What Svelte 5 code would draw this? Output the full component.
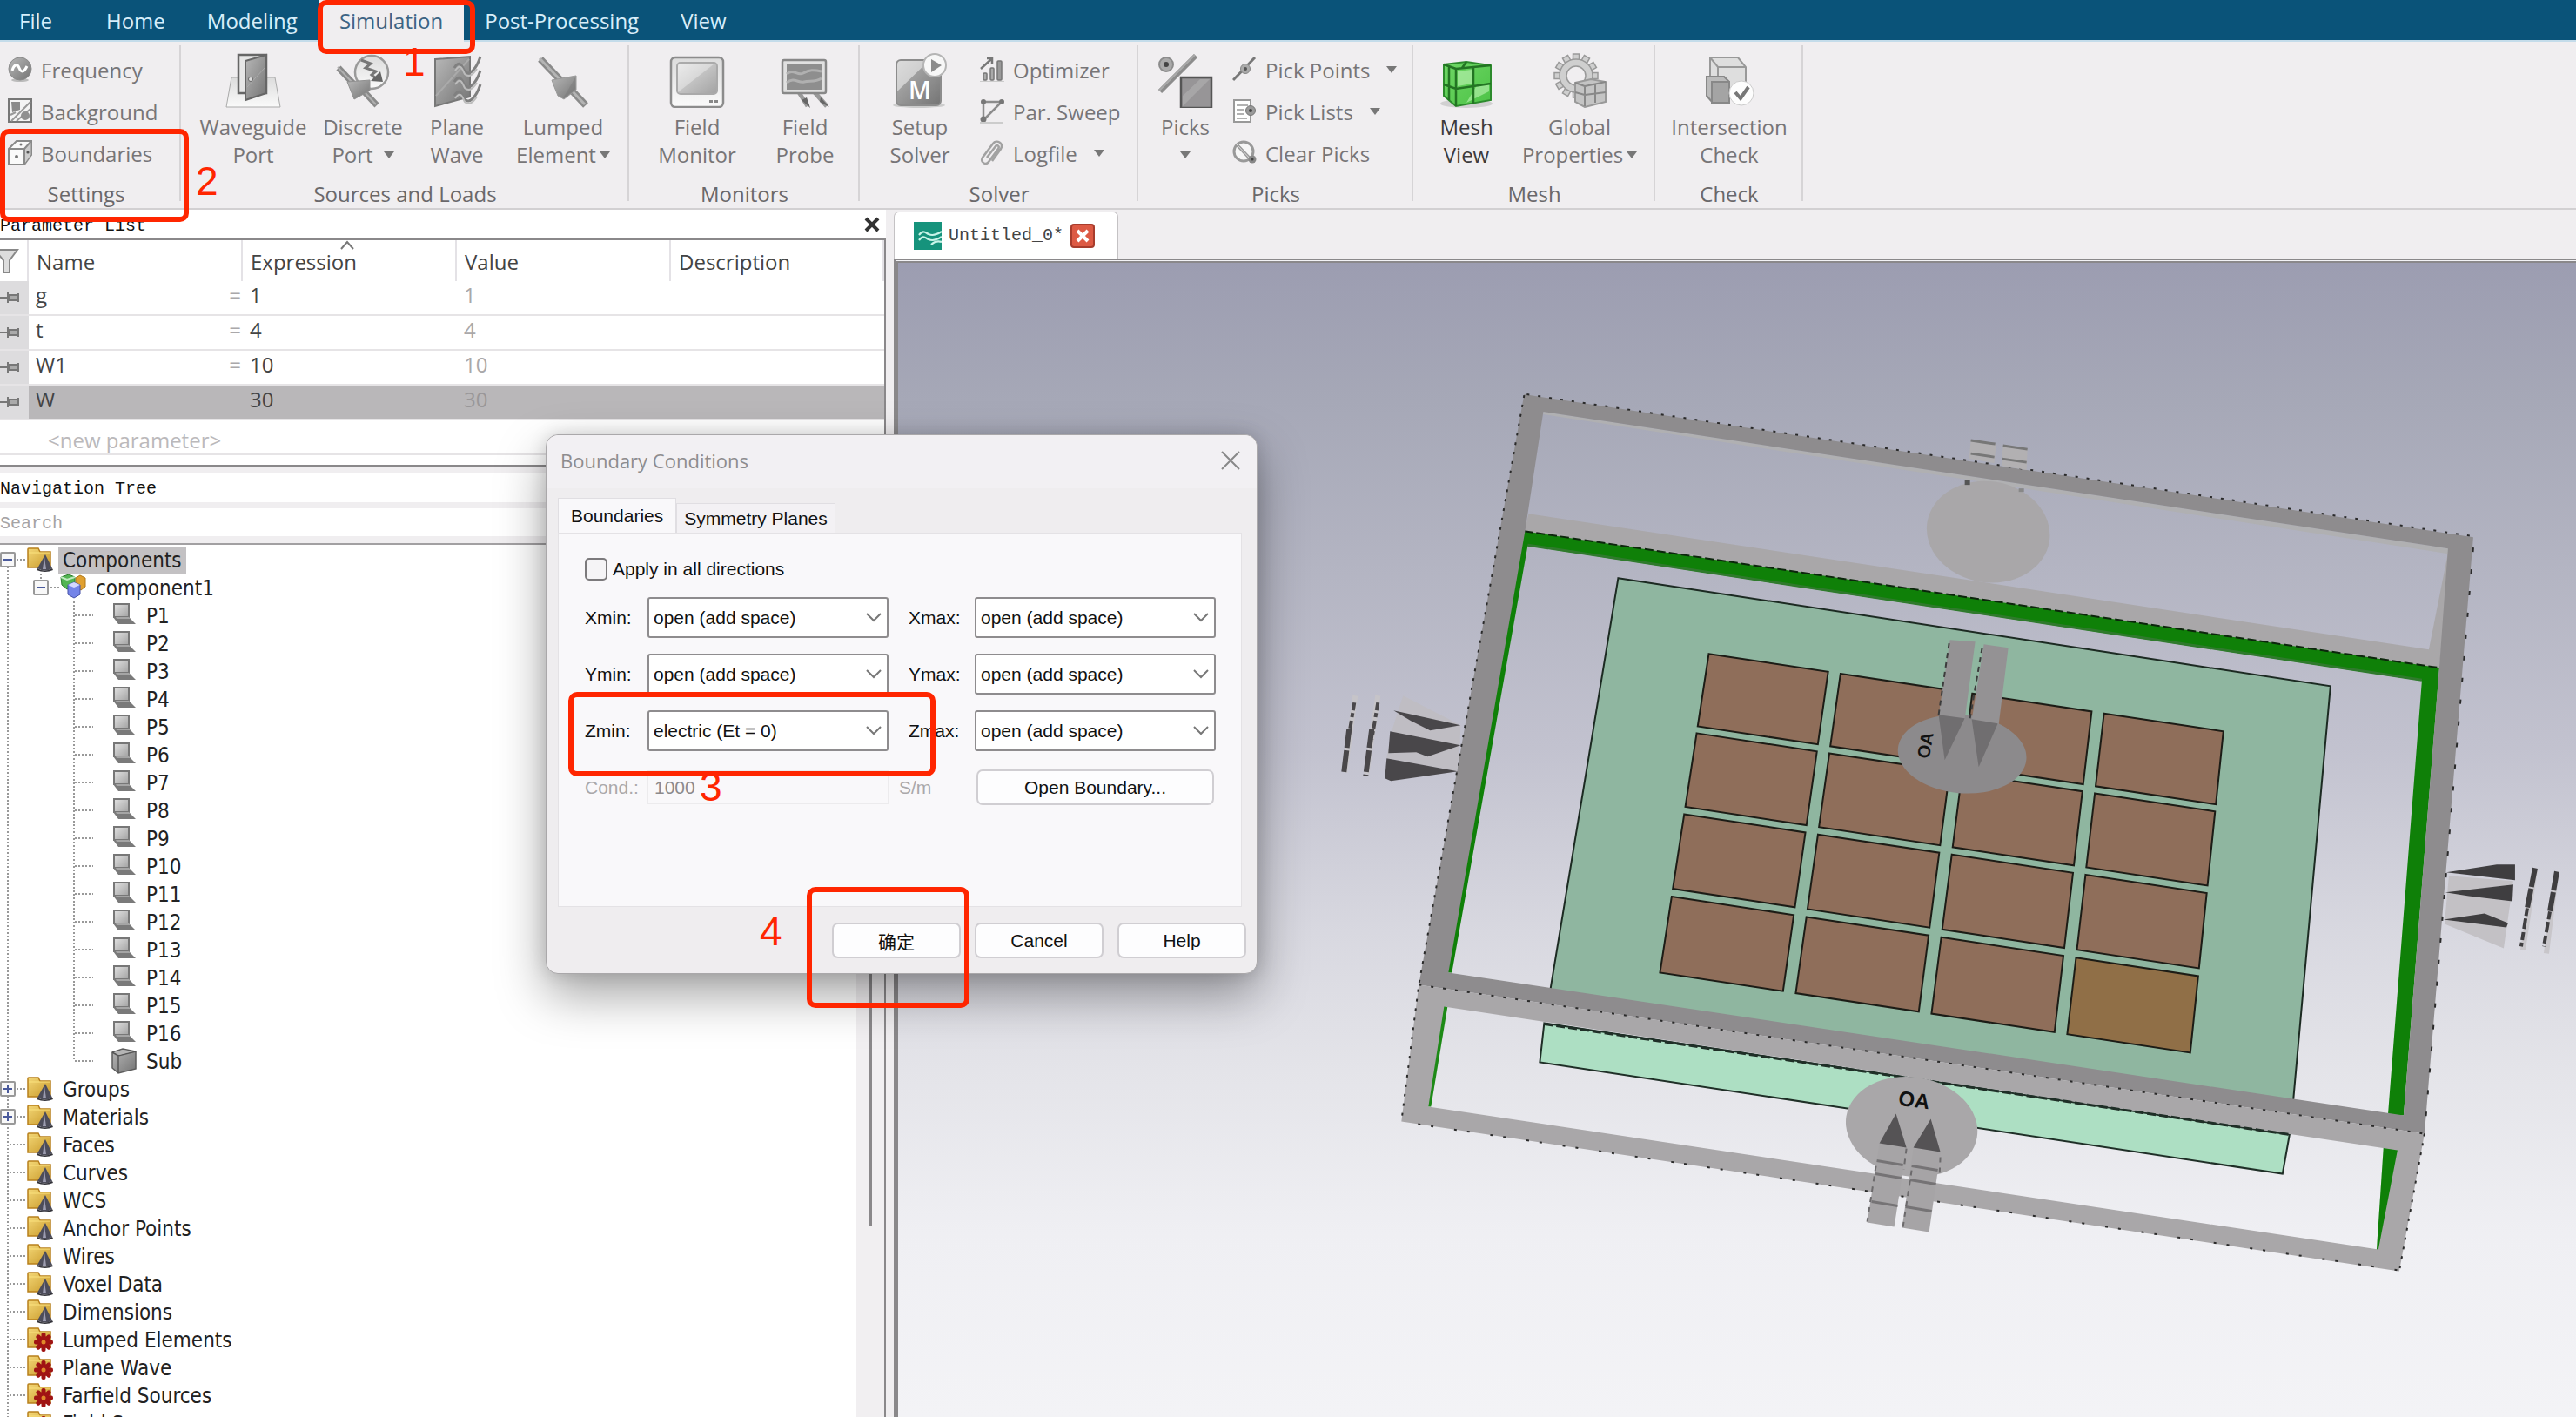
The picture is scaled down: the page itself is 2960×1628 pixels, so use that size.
<script>
  const menu = ['File', 'Home', 'Modeling', 'Simulation', 'Post-Processing', 'View'];

  const groups = [
    {
      name: 'Settings', cls: 'settings', big: [],
      small: [
        { icon: 'frequency', text: 'Frequency' },
        { icon: 'background', text: 'Background' },
        { icon: 'boundaries', text: 'Boundaries' }
      ]
    },
    {
      name: 'Sources and Loads', cls: 'sources', small: [],
      big: [
        { icon: 'waveguide', a: 'Waveguide', b: 'Port', cls: 'w140' },
        { icon: 'discrete', a: 'Discrete', b: 'Port', drop: true, spaced: true, cls: 'w112' },
        { icon: 'plane', a: 'Plane', b: 'Wave', cls: 'w104' },
        { icon: 'lumped', a: 'Lumped', b: 'Element', drop: true, cls: 'w140' }
      ]
    },
    {
      name: 'Monitors', cls: 'monitors', small: [],
      big: [
        { icon: 'monitor', a: 'Field', b: 'Monitor', cls: 'w124' },
        { icon: 'probe', a: 'Field', b: 'Probe', cls: 'w124' }
      ]
    },
    {
      name: 'Solver', cls: 'solver',
      big: [{ icon: 'setup', a: 'Setup', b: 'Solver', cls: 'w104' }],
      small: [
        { icon: 'optimizer', text: 'Optimizer' },
        { icon: 'sweep', text: 'Par. Sweep' },
        { icon: 'logfile', text: 'Logfile', drop: true }
      ]
    },
    {
      name: 'Picks', cls: 'picks',
      big: [{ icon: 'picks', a: 'Picks', b: '', drop: true, cls: 'w88' }],
      small: [
        { icon: 'pickpoints', text: 'Pick Points', drop: true },
        { icon: 'picklists', text: 'Pick Lists', drop: true },
        { icon: 'clearpicks', text: 'Clear Picks' }
      ]
    },
    {
      name: 'Mesh', cls: 'mesh', small: [],
      big: [
        { icon: 'mesh', a: 'Mesh', b: 'View', dark: true, cls: 'w104' },
        { icon: 'global', a: 'Global', b: 'Properties', drop: true, cls: 'w156' }
      ]
    },
    {
      name: 'Check', cls: 'check', small: [],
      big: [{ icon: 'intersect', a: 'Intersection', b: 'Check', cls: 'w172' }]
    }
  ];

  const params = [
    { name: 'g', eq: true, value: '1' },
    { name: 't', eq: true, value: '4' },
    { name: 'W1', eq: true, value: '10' },
    { name: 'W', eq: false, value: '30', selected: true }
  ];

  const tree = [
    { level: 0, box: 'minus', icon: 'folder', text: 'Components', selected: true, first: true },
    { level: 1, box: 'minus', icon: 'cubes', text: 'component1' },
    ...Array.from({ length: 16 }, (_, i) => ({ level: 2, icon: 'patch', text: 'P' + (i + 1) })),
    { level: 2, icon: 'brick', text: 'Sub', last: true },
    { level: 0, box: 'plus', icon: 'folder', text: 'Groups' },
    { level: 0, box: 'plus', icon: 'folder', text: 'Materials' },
    ...['Faces', 'Curves', 'WCS', 'Anchor Points', 'Wires', 'Voxel Data', 'Dimensions']
      .map((text) => ({ level: 0, icon: 'folder', text })),
    ...['Lumped Elements', 'Plane Wave', 'Farfield Sources', 'Field Sources']
      .map((text) => ({ level: 0, icon: 'gearfolder', text }))
  ];

  const axes = [
    { min: 'Xmin:', max: 'Xmax:', value: 'open (add space)' },
    { min: 'Ymin:', max: 'Ymax:', value: 'open (add space)' },
    { min: 'Zmin:', max: 'Zmax:', value: 'electric (Et = 0)' }
  ];
  const kinds = ['electric (Et = 0)', 'magnetic (Ht = 0)', 'open', 'open (add space)'];

  // Patch array: bilinear interpolation between the four outer corners.
  const corners = [[1964, 752], [2555, 841], [1908, 1118], [2517, 1210]];
  const rows = [[0, 0.227], [0.249, 0.48], [0.503, 0.737], [0.7615, 1]];
  function at(u, v) {
    return [0, 1]
      .map((k) => {
        const top = corners[0][k] * (1 - u) + corners[1][k] * u;
        const bottom = corners[2][k] * (1 - u) + corners[3][k] * u;
        return (top * (1 - v) + bottom * v).toFixed(1);
      })
      .join(',');
  }
  const patches = rows.flatMap(([v0, v1], r) =>
    [0, 1, 2, 3].map((c) => {
      const u0 = c * 0.256;
      const u1 = u0 + 0.232;
      return { points: [at(u0, v0), at(u1, v0), at(u1, v1), at(u0, v1)].join(' '), active: r === 3 && c === 3 };
    })
  );

  const teeth = Array.from({ length: 12 }, (_, i) => i * 30);
  const petals = Array.from({ length: 8 }, (_, i) => i * 45);
</script>

{#snippet art(name)}
  {#if name === 'frequency'}
    <ellipse cx="14" cy="27" rx="10" ry="2" fill="#bbb" />
    <circle cx="14" cy="14" r="13" fill="url(#gDark)" stroke="#8a8a8a" />
    <path d="M5 16c2-7 6-8 8-3s5 6 9-2" fill="none" stroke="#fff" stroke-width="3" />
  {:else if name === 'background'}
    <rect x="1" y="1" width="26" height="26" fill="#f4f4f4" stroke="#777" stroke-width="2" />
    <path d="M4 4h10v9l-9 3z" fill="#8a8a8a" />
    <path d="M4 26L26 4M3 19l6-3M16 14l8-8M10 26L26 12" stroke="#999" stroke-width="2" />
    <circle cx="20" cy="20" r="5" fill="#909090" />
  {:else if name === 'boundaries'}
    <path d="M1 10l9-9h17v16l-8 11H1z" fill="#fafafa" stroke="#8a8a8a" stroke-width="2" />
    <path d="M19 10l8-9v16l-8 11z" fill="#ccc" stroke="#8a8a8a" />
    <path d="M1 10h18v18M19 10l8-9" fill="none" stroke="#8a8a8a" stroke-width="2" />
    <circle cx="10" cy="19" r="2" fill="#777" /><circle cx="15" cy="5" r="1.5" fill="#777" /><circle cx="23" cy="14" r="1.6" fill="#555" />
  {:else if name === 'optimizer'}
    <path d="M1 14L13 3M8 2h6v6" fill="none" stroke="#777" stroke-width="2.5" />
    <rect x="4" y="19" width="4" height="8" rx="1" fill="#aaa" stroke="#777" stroke-width="1.5" />
    <rect x="12" y="13" width="4" height="14" rx="1" fill="#aaa" stroke="#777" stroke-width="1.5" />
    <rect x="20" y="5" width="5" height="22" rx="1" fill="#999" stroke="#777" stroke-width="1.5" />
    <path d="M0 28.500h28" stroke="#ccc" />
  {:else if name === 'sweep'}
    <path d="M4 25V4h21L4 25" fill="none" stroke="#8c8c8c" stroke-width="2.500" />
    <circle cx="4" cy="4" r="3" fill="#777" /><circle cx="25" cy="4" r="3" fill="#777" /><circle cx="4" cy="24" r="3.500" fill="#777" />
    <path d="M0 28h27" stroke="#ccc" stroke-width="2" />
  {:else if name === 'logfile'}
    <path d="M8 20L18 7c2-2 5 0 3 3L10 25c-3 4-10 1-7-5L15 4c4-5 13-1 9 6L14 24" fill="none" stroke="#a2a2a2" stroke-width="2.500" />
  {:else if name === 'pickpoints'}
    <path d="M1 27L26 1" stroke="#777" stroke-width="3" />
    <circle cx="15" cy="14" r="5.500" fill="#aaa" stroke="#888" /><circle cx="15" cy="14" r="2" fill="#555" />
  {:else if name === 'picklists'}
    <path d="M2 2h19v25H2z" fill="#fff" stroke="#999" stroke-width="2" />
    <path d="M5 8h13M5 13h9M5 18h9M5 23h12" stroke="#999" stroke-width="1.500" />
    <circle cx="21" cy="14" r="5.500" fill="#999" stroke="#777" /><circle cx="21" cy="14" r="2" fill="#444" />
  {:else if name === 'clearpicks'}
    <circle cx="13" cy="13" r="11" fill="#f6f6f6" stroke="#999" stroke-width="3" />
    <path d="M5 5l17 18" stroke="#999" stroke-width="3.500" /><path d="M5 5l17 18" stroke="#ddd" />
    <circle cx="23" cy="22" r="4.500" fill="#888" /><circle cx="23" cy="22" r="1.600" fill="#444" />
  {:else if name === 'waveguide'}
    <path d="M7 29h50l6 34H1z" fill="url(#gPale)" stroke="#aaa" />
    <path d="M15 3h32v44H15z" fill="#e6e6e6" stroke="#666" stroke-width="2.500" />
    <path d="M23 10L47 3v44l-24 8z" fill="url(#gDark)" stroke="#666" stroke-width="2" />
    <path d="M25 40l20-22" stroke="#aaa" /><circle cx="29" cy="31" r="2.500" fill="#ddd" stroke="#666" />
  {:else if name === 'discrete'}
    <circle cx="42" cy="23" r="19" fill="url(#gPale)" stroke="#9a9a9a" stroke-width="2.500" />
    <path d="M30 9l11 4-6 5 12 4-5 4 6 5" fill="none" stroke="#777" stroke-width="3" />
    <path d="M55 34l-14-1 11-11z" fill="#666" />
    <path d="M4 18l17 18M34 46l14 15" stroke="#8a8a8a" stroke-width="7" />
    <path d="M3 17l17 18M33 45l14 15" stroke="#b0b0b0" stroke-width="2" />
    <path d="M14 34l26-2v12L22 54z" fill="url(#gDark)" stroke="#909090" />
  {:else if name === 'plane'}
    <path d="M7 8l40-3v46L7 62z" fill="url(#gDark)" stroke="#777" stroke-width="2" />
    <path d="M8 50L46 8" stroke="#aaa" stroke-width="2" />
    {#each [0, 16, 32] as dy}
      <path d="M29 {18 + dy}c6-10 9-2 12 4 5 6 13-2 18-17" fill="none" stroke="#808080" stroke-width="3" />
      <path d="M30 {21 + dy}c6-9 8-2 11 4 4 4 9 2 14-6" fill="none" stroke="#bcbcbc" stroke-width="2" />
    {/each}
  {:else if name === 'lumped'}
    <path d="M6 8l23 24M42 44l16 17" stroke="#8a8a8a" stroke-width="8" />
    <path d="M5 7l23 24M41 43l16 17" stroke="#b4b4b4" stroke-width="3" />
    <path d="M19 32l28-5v16L33 54l-7-4z" fill="url(#gDark)" stroke="#999" />
    <path d="M46 29v13L32 53z" fill="#777" opacity=".45" />
  {:else if name === 'monitor'}
    <rect x="2" y="6" width="60" height="57" rx="5" fill="url(#gPale)" stroke="#8c8c8c" stroke-width="2.500" />
    <rect x="9" y="12" width="46" height="36" rx="4" fill="url(#gMid)" stroke="#aaa" stroke-width="2" />
    <path d="M10 46L52 13H13q-3 0-3 4z" fill="#fff" opacity=".35" />
    <rect x="46" y="55" width="4" height="3" fill="#888" /><rect x="52" y="55" width="4" height="3" fill="#888" />
  {:else if name === 'probe'}
    <path d="M25 46l10 16M43 46l14 16" stroke="#999" stroke-width="5" />
    <path d="M34 52l4 12-10-9zM50 52l10 11-11-6z" fill="#666" />
    <rect x="6" y="9" width="50" height="38" rx="2" fill="#e0e0e0" stroke="#888" stroke-width="2.500" />
    <rect x="11" y="13" width="40" height="30" fill="#8e8e8e" />
    <path d="M11 25c8-7 12 3 19-1s12-4 21-2M11 35c8-7 14 1 20-1s12 1 20-4" fill="none" stroke="#b0b0b0" stroke-width="3" />
  {:else if name === 'setup'}
    <ellipse cx="31" cy="61" rx="30" ry="3" fill="#ccc" />
    <rect x="5" y="9" width="51" height="52" rx="5" fill="url(#gDark)" stroke="#8c8c8c" stroke-width="2" />
    <path d="M6 45L42 10H10q-4 0-4 5z" fill="#fff" opacity=".5" />
    <text x="32" y="54" text-anchor="middle" class="glyph-m">M</text>
    <circle cx="49" cy="15" r="13" fill="#f7f7f7" stroke="#b5b5b5" stroke-width="2" />
    <path d="M45 8l12 7-12 8z" fill="#8b8b8b" />
  {:else if name === 'picks'}
    <path d="M3 45L44 4" stroke="#8c8c8c" stroke-width="6" /><path d="M2 44L43 3" stroke="#aaa" stroke-width="2" />
    <circle cx="10" cy="14" r="8" fill="#aaa" stroke="#8c8c8c" stroke-width="2" /><circle cx="10" cy="14" r="3" fill="#444" />
    <rect x="27" y="29" width="35" height="35" fill="#979597" stroke="#555" stroke-width="2.500" />
    <path d="M29 62V50l20-19h11z" fill="#fff" opacity=".16" />
  {:else if name === 'mesh'}
    <ellipse cx="32" cy="59" rx="30" ry="5" fill="#999" opacity=".35" />
    <path d="M6 14l26-3 28 4v40l-40 7L6 50z" fill="url(#gGreen)" stroke="#2c8a2c" stroke-width="2" />
    <path d="M22 22l16-2v16l-16 3zM44 38l14-1v8L32 58z" fill="#c9f7c0" opacity=".55" />
    <path d="M6 14l14 5v43M20 19l40-4M32 11l-5 7M12 16v39M40 17v42M6 37l14 5 40-6" fill="none" stroke="#237423" stroke-width="2.500" />
  {:else if name === 'global'}
    <g transform="translate(28 27)" fill="#cfcfcf" stroke="#999" stroke-width="1.500">
      {#each teeth as t}<rect x="-3.500" y="-25" width="7" height="9" transform="rotate({t})" />{/each}
      <circle r="19" />
      <circle r="11" fill="#f0eef0" />
    </g>
    <path d="M27 35l18-4 17 3v23l-24 6-11-6z" fill="#c4c4c4" stroke="#999" stroke-width="2" />
    <path d="M27 35l11 4v23M38 39l24-5M50 36v22M38 49l24-3M27 46l11 3" fill="none" stroke="#888" stroke-width="2" />
  {:else if name === 'intersect'}
    <path d="M10 6h32l9 11v28H19l-9-8z" fill="#dedede" stroke="#999" stroke-width="2" />
    <path d="M10 6l9 11h32M19 17v28" fill="none" stroke="#999" stroke-width="2" />
    <path d="M6 28h20l6 6v24H13l-7-8z" fill="#bbb" stroke="#888" stroke-width="2" />
    <path d="M12 34h20v24H12z" fill="#a4a4a4" stroke="#888" stroke-width="2" />
    <circle cx="46" cy="47" r="14" fill="#fdfdfd" stroke="#ccc" />
    <path d="M39 46l6 7 9-13" fill="none" stroke="#777" stroke-width="4" />
  {/if}
{/snippet}

{#snippet treeArt(name)}
  {#if name === 'folder' || name === 'gearfolder'}
    <path d="M1 24V3q0-1 1-1h11l2 4h12v18z" fill="url(#gFolder)" stroke="#b8801c" stroke-width="1.500" />
    <path d="M2 7h24" stroke="#fbe27e" />
    {#if name === 'folder'}
      <path d="M21 9l8 16q-8 5-17 0z" fill="#4c4c5a" /><path d="M20 12l2 14h-4z" fill="#9c9cb0" /><path d="M12 25q8 5 17 0l1 2q-9 4-19 0z" fill="#33333a" />
    {:else}
      <g transform="translate(19 18)" fill="#a01414">
        {#each petals as t}<rect x="-2.500" y="-11" width="5" height="9" rx="2" transform="rotate({t})" />{/each}
        <circle r="7" /><circle r="2.500" fill="#e08a2a" />
      </g>
    {/if}
  {:else if name === 'cubes'}
    <path d="M18 4l5-3 6 3v10l-5 4-6-4z" fill="#e0a030" stroke="#b07818" />
    <path d="M1 3l9-3 7 3v10l-9 4-6-5z" fill="#52b552" stroke="#2c7c2c" /><path d="M1 3l7 3 9-3" fill="none" stroke="#bfeabf" stroke-width="2" />
    <path d="M9 12l7-3 7 3v11l-7 4-7-4z" fill="#7484e8" stroke="#4450a8" /><path d="M9 12l7 3 7-3-7-3z" fill="#d4d8ff" />
  {:else if name === 'patch'}
    <rect x="4" y="2" width="17" height="15" fill="url(#gMid)" stroke="#777" stroke-width="2" />
    <path d="M3 17h18l8 8H9z" fill="#7a7a7a" /><path d="M6 17h15l2 2H7z" fill="#a5a5a5" />
  {:else if name === 'brick'}
    <path d="M2 5l12-4 15 3v20L9 29l-7-6z" fill="url(#gDark)" stroke="#5c5c5c" stroke-width="1.500" />
    <path d="M2 5l7 4 20-5M9 9v20" fill="none" stroke="#555" stroke-width="1.500" /><path d="M4 5l10-3 12 2-16 4z" fill="#b5b5b5" />
  {/if}
{/snippet}

{#snippet guide(item)}
  {#if item.level === 0}
    <svg class="guide" width="31" height="32" viewBox="0 0 31 32" aria-hidden="true">
      <path class="dots" d={item.first ? 'M9 24V32' : 'M9 0V32'} /><path class="dots" d="M11 16H31" />
      {#if item.box}
        <rect x="1" y="8" width="16" height="16" rx="1" fill="#f8f8f8" stroke="#999" stroke-width="2" />
        <path d={item.box === 'plus' ? 'M4 16h10M9 11v10' : 'M4 16h10'} stroke="#4a5a9c" stroke-width="2" />
      {/if}
    </svg>
  {:else if item.level === 1}
    <svg class="guide" width="69" height="32" viewBox="0 0 69 32" aria-hidden="true">
      <path class="dots" d="M9 0V32M47 0V8M58 16H69" />
      <rect x="39" y="8" width="16" height="16" rx="1" fill="#f8f8f8" stroke="#999" stroke-width="2" />
      <path d="M42 16h10" stroke="#4a5a9c" stroke-width="2" />
    </svg>
  {:else}
    <svg class="guide" width="127" height="32" viewBox="0 0 127 32" aria-hidden="true">
      <path class="dots" d={item.last ? 'M9 0V32M85 0V16' : 'M9 0V32M85 0V32'} /><path class="dots" d="M86 16H107" />
    </svg>
  {/if}
{/snippet}

{#snippet combo(id, value)}
  <span class="combo">
    <select {id} {value}>
      {#each kinds as k}<option value={k}>{k}</option>{/each}
    </select>
    <svg width="18" height="12" viewBox="0 0 18 12" aria-hidden="true"><path d="M1 1l8 8 8-8" fill="none" stroke="#777" stroke-width="2" /></svg>
  </span>
{/snippet}

<div class="app">
  <svg width="0" height="0" class="defs" aria-hidden="true">
    <defs>
      <linearGradient id="gDark" x1="0" y1="0" x2="1" y2="1"><stop offset="0" stop-color="#b8b8b8" /><stop offset="1" stop-color="#747474" /></linearGradient>
      <linearGradient id="gMid" x1="0" y1="0" x2="1" y2="1"><stop offset="0" stop-color="#e2e2e2" /><stop offset="1" stop-color="#a2a2a2" /></linearGradient>
      <linearGradient id="gPale" x1="0" y1="0" x2="0" y2="1"><stop offset="0" stop-color="#dcdcdc" /><stop offset="1" stop-color="#fafafa" /></linearGradient>
      <linearGradient id="gGreen" x1="0" y1="0" x2="1" y2="1"><stop offset="0" stop-color="#6fd765" /><stop offset="1" stop-color="#4cc246" /></linearGradient>
      <linearGradient id="gFolder" x1="0" y1="0" x2="1" y2="1"><stop offset="0" stop-color="#f4d878" /><stop offset="1" stop-color="#c89828" /></linearGradient>
    </defs>
  </svg>

  <nav class="menubar">
    {#each menu as m}
      <button class="menu" class:file={m === 'File'} class:current={m === 'Simulation'}>{m}
        {#if m === 'Simulation'}<span class="mark mark-1"></span><span class="num num-1">1</span>{/if}
      </button>
    {/each}
  </nav>

  <div class="ribbon">
    {#each groups as g}
      <section class="group {g.cls}">
        <div class="tools">
          {#each g.big as b}
            <button class="big {b.cls}" class:dark={b.dark}>
              <svg width="64" height="64" viewBox="0 0 64 64" aria-hidden="true">{@render art(b.icon)}</svg>
              <span>{b.a}</span>
              <span class="line" class:spaced={b.spaced}>{b.b}{#if b.drop}<i class="arrow"></i>{/if}</span>
            </button>
          {/each}
          {#if g.small.length}
            <div class="stack">
              {#each g.small as s}
                <button class="small">
                  <svg width="28" height="30" viewBox="0 0 28 30" aria-hidden="true">{@render art(s.icon)}</svg>
                  <span>{s.text}</span>{#if s.drop}<i class="arrow"></i>{/if}
                </button>
              {/each}
            </div>
          {/if}
        </div>
        <div class="caption">{g.name}</div>
        {#if g.name === 'Settings'}<span class="mark mark-2"></span><span class="num num-2">2</span>{/if}
      </section>
    {/each}
  </div>

  <main class="work">
    <aside class="side">
      <header class="panel-title">
        <span>Parameter List</span>
        <button class="x" aria-label="Close parameter list"><svg width="18" height="18" viewBox="0 0 18 18"><path d="M2 2l14 14M16 2L2 16" stroke="#333" stroke-width="4" /></svg></button>
      </header>
      <div class="params">
        <table>
          <colgroup><col class="c-pin" /><col class="c-a" /><col class="c-a" /><col class="c-a" /><col /></colgroup>
          <thead>
            <tr>
              <th class="filter"><svg width="22" height="28" viewBox="0 0 22 28" role="img" aria-label="Filter"><path d="M-6 1h26l-9 12v14H4V13z" fill="#ddd" stroke="#888" stroke-width="2" /></svg></th>
              <th>Name</th>
              <th class="sorted">Expression<svg width="16" height="12" viewBox="0 0 16 12" aria-hidden="true"><path d="M1 10l7-8 7 8" fill="none" stroke="#777" stroke-width="2" /></svg></th>
              <th>Value</th>
              <th>Description</th>
            </tr>
          </thead>
          <tbody>
            {#each params as p}
              <tr class:picked={p.selected}>
                <td class="pin"><svg width="24" height="16" viewBox="0 0 24 16" aria-hidden="true"><path d="M0 8h8" stroke="#777" stroke-width="2" /><path d="M9 2v12M21 3v10" stroke="#777" stroke-width="2" /><path d="M10 5h10v6H10z" fill="#aaa" stroke="#777" stroke-width="2" /></svg></td>
                <td><div class="pair"><span>{p.name}</span>{#if p.eq}<span class="eq">=</span>{/if}</div></td>
                <td>{p.value}</td>
                <td class="muted">{p.value}</td>
                <td></td>
              </tr>
            {/each}
          </tbody>
        </table>
        <div class="new">&lt;new parameter&gt;</div>
      </div>
      <header class="panel-title nav-title"><span>Navigation Tree</span></header>
      <input class="search" type="text" placeholder="Search" aria-label="Search" />
      <div class="tree-box">
        <ul class="tree">
          {#each tree as item}
            <li>
              {@render guide(item)}
              <svg width="30" height="30" viewBox="0 0 30 30" aria-hidden="true">{@render treeArt(item.icon)}</svg>
              <span class="label" class:selected={item.selected}>{item.text}</span>
            </li>
          {/each}
        </ul>
        <div class="scroll"><div class="thumb"></div></div>
      </div>
    </aside>

    <section class="view">
      <div class="doc-tabs">
        <div class="doc-tab">
          <svg width="32" height="32" viewBox="0 0 32 32" aria-hidden="true"><rect width="32" height="32" fill="#16937c" /><path d="M6 15c5-6 7-3 11-1s9 1 15-3M6 21c5-6 7-3 11-1s9 1 15-3M20 26q5-5 12-3" fill="none" stroke="#c8f4e8" stroke-width="2.200" /></svg>
          <span>Untitled_0*</span>
          <button aria-label="Close document"><svg width="28" height="28" viewBox="0 0 28 28"><rect x="1" y="1" width="26" height="26" rx="3" fill="#dd5a44" stroke="#a83c2c" stroke-width="2" /><path d="M8 8l12 12M20 8L8 20" stroke="#fff" stroke-width="4" /></svg></button>
        </div>
      </div>
      <div class="canvas">
        <svg class="scene" viewBox="1033 303 1927 1326" preserveAspectRatio="xMinYMin meet" role="img" aria-label="3D model">
          <!-- substrate -->
          <polygon points="1860,665 2678,789 2635,1268 1782,1138" fill="#8fb6a0" stroke="#1c2a22" stroke-width="2" />
          {#each patches as p}
            <polygon points={p.points} fill={p.active ? '#906f47' : '#8f6e5a'} stroke="#1c1c16" stroke-width="2" />
          {/each}
          <!-- upper box -->
          <polygon points="1757,591 2791,747 2813,636 2815,640 2803,769 1752,612" fill="#a9a7a9" />
          <polygon points="1774,474 2813,631 2813,637 1774,477" fill="#b0b0b2" />
          <polygon points="1752,611 2803,768 2762,1282 2744,1282 2783,783 1756,628 1669,1118 1663,1118" fill="#0f8008" />
          <path d="M1756 627L2783 782" stroke="#2f7a2c" stroke-width="3" />
          <path d="M1752 611L2803 768" stroke="#0c260c" stroke-width="2" stroke-dasharray="10 4" />
          <path d="M1752 454L2842 618L2786 1303L1631 1132ZM1774 474L1753 611L1665 1118L2762 1282L2803 768L2813 631Z" fill="#8e8c8e" fill-rule="evenodd" />
          <!-- lower box -->
          <polygon points="1775,1176 2631,1304 2623,1349 1770,1221" fill="#addfc3" stroke="#1f2f27" stroke-width="2" />
          <polygon points="1657,1155 1664,1157 1645,1272 1641,1272" fill="#1d8a16" />
          <polygon points="2739,1317 2756,1321 2735,1437 2731,1437" fill="#0f8008" />
          <path d="M1631 1132L2786 1303L2757 1461L1611 1289ZM1660 1157L1642 1272L2733 1436L2755 1322Z" fill="#a9a7a9" fill-rule="evenodd" />
          <path d="M1775 1177L2631 1304" stroke="#1f2f27" stroke-width="3" stroke-dasharray="10 4" />
          <g stroke="#2a2a2a" stroke-width="2" fill="none">
            <path d="M1755 454L2842 617" stroke-dasharray="3 10" />
            <path d="M1752 455L1631 1132L1611 1289" stroke-dasharray="3 8" />
            <path d="M2842 630L2786 1303" stroke-dasharray="5 20" />
            <path d="M2786 1303L2757 1461" stroke-dasharray="3 8" />
            <path d="M1631 1132L2786 1303" stroke-dasharray="3 11" />
            <path d="M1630 1292L2757 1460" stroke-dasharray="3 12 3 24" />
          </g>
          <!-- side port, left -->
          <polygon points="1613,800 1679,834 1678,860 1675,887 1594,872 1600,840" fill="#bfbdc3" />
          <g fill="#49474a">
            <polygon points="1602,817 1679,834 1644,840 1622,829" />
            <polygon points="1598,841 1679,857 1641,870 1628,865 1596,866" />
            <polygon points="1594,872 1676,887 1599,898 1592,895" />
          </g>
          <g fill="none" stroke="#c6c4c8" stroke-width="6"><path d="M1558 800L1546 888M1584 800L1571 890" /></g>
          <g fill="none" stroke="#49474a"><path d="M1557 808L1550 850M1584 808L1577 850" stroke-width="4" stroke-dasharray="9 3 5 4" /><path d="M1551 838L1545 888M1577 838L1570 892" stroke-width="6" stroke-dasharray="22 3 25 3" /></g>
          <!-- side port, right -->
          <polygon points="2814,1007 2888,1013 2877,1090 2809,1062" fill="#c3c1c5" />
          <g fill="#3f3e40">
            <polygon points="2811,1003 2869,994 2890,994 2890,1012" />
            <polygon points="2810,1026 2888,1017 2887,1036 2837,1030" />
            <polygon points="2808,1057 2855,1050 2882,1061 2880,1066" />
          </g>
          <g fill="none" stroke="#c8c6ca" stroke-width="6"><path d="M2913 1000L2899 1092M2937 1006L2926 1096" /></g>
          <g fill="none" stroke="#3f3e40"><path d="M2913 998L2904 1044M2938 1002L2930 1048" stroke-width="6" stroke-dasharray="22 2 22 2" /><path d="M2904 1044L2897 1088M2930 1048L2923 1088" stroke-width="4" stroke-dasharray="9 3 12 4" /></g>
          <!-- top port -->
          <polygon points="2265,506 2294,511 2292,533 2263,528" fill="#b2b0b2" /><polygon points="2302,512 2330,517 2329,541 2300,536" fill="#b2b0b2" />
          <path d="M2265 507l28 4M2265 522l27 4M2302 513l28 4M2301 528l28 4" stroke="#777" stroke-width="3" />
          <ellipse cx="2285" cy="612" rx="71" ry="58" transform="rotate(9 2285 612)" fill="#a9a7a9" />
          <rect x="2258" y="552" width="6" height="6" fill="#555" /><rect x="2320" y="562" width="6" height="4" fill="#888" />
          <!-- centre port -->
          <ellipse cx="2255" cy="867" rx="74" ry="45" transform="rotate(5 2255 867)" fill="#8c8a8c" />
          <polygon points="2241,736 2270,738 2258,827 2228,823" fill="#949294" /><polygon points="2280,741 2308,745 2297,833 2266,828" fill="#949294" />
          <path d="M2240 740L2228 822M2278 745L2264 826" stroke="#3c3c3c" stroke-dasharray="6 5" stroke-width="2" />
          <polygon points="2228,822 2258,826 2235,874" fill="#706e70" /><polygon points="2266,827 2296,832 2274,882" fill="#706e70" />
          <text class="oa" font-size="20" transform="translate(2217 873) rotate(-80)">OA</text>
          <!-- bottom port -->
          <ellipse cx="2197" cy="1295" rx="76" ry="57" transform="rotate(9 2197 1295)" fill="#a9a7a9" />
          <polygon points="2160,1314 2191,1319 2177,1410 2146,1405" fill="#a6a4a6" /><polygon points="2199,1320 2230,1325 2217,1416 2186,1411" fill="#a6a4a6" />
          <path d="M2157 1334l30 5M2155 1349l30 5M2151 1381l30 5M2197 1340l30 5M2195 1356l30 5M2190 1387l30 5" stroke="#757375" stroke-width="3" />
          <path d="M2156 1340L2146 1404M2191 1320L2188 1344M2197 1345L2187 1410M2230 1330L2229 1350" stroke="#6c6a6c" stroke-dasharray="6 6" stroke-width="2" />
          <polygon points="2179,1280 2160,1314 2191,1319" fill="#555355" /><polygon points="2219,1286 2199,1319 2230,1324" fill="#555355" />
          <text class="oa" font-size="24" transform="translate(2181 1270) rotate(8)">OA</text>
        </svg>
      </div>
    </section>
  </main>

  <div class="dialog" role="dialog" aria-label="Boundary Conditions">
    <header>
      <span>Boundary Conditions</span>
      <button aria-label="Close"><svg width="22" height="22" viewBox="0 0 22 22"><path d="M1 1l20 20M21 1L1 21" stroke="#888" stroke-width="2" /></svg></button>
    </header>
    <div class="tabs">
      <button class="tab on">Boundaries</button>
      <button class="tab">Symmetry Planes</button>
    </div>
    <div class="page">
      <label class="all"><input type="checkbox" /><span>Apply in all directions</span></label>
      <div class="fields">
        {#each axes as a}
          <label for={a.min}>{a.min}</label>
          {@render combo(a.min, a.value)}
          <label class="second" for={a.max}>{a.max}</label>
          {@render combo(a.max, 'open (add space)')}
        {/each}
        <label class="off" for="cond">Cond.:</label>
        <input id="cond" type="text" value="1000" disabled />
        <span class="off unit">S/m</span>
        <button class="btn wide">Open Boundary...</button>
      </div>
    </div>
    <footer>
      <button class="btn">确定</button>
      <button class="btn">Cancel</button>
      <button class="btn">Help</button>
    </footer>
    <span class="mark mark-3"></span><span class="num num-3">3</span>
    <span class="mark mark-4"></span><span class="num num-4">4</span>
  </div>
</div>

<style>
  :global(body) { margin: 0; overflow: hidden; }
  .app {
    position: relative;
    height: 100vh;
    display: flex;
    flex-direction: column;
    overflow: hidden;
    background: #f0eef0;
    font-family: "Open Sans", "Noto Sans", "Noto Sans CJK SC", sans-serif;
    font-size: 24px;
    color: #444;
  }
  .defs { position: absolute; }
  button { font: inherit; color: inherit; background: none; border: 0; padding: 0; margin: 0; }
  svg { display: block; flex: none; }

  .menubar { display: flex; height: 46px; flex: none; background: #0a5379; border-bottom: 2px solid #c4dcea; }
  .menu { position: relative; height: 48px; padding: 0 24px; line-height: 46px; color: #d8eefa; white-space: nowrap; }
  .menu.file { padding-right: 38px; padding-left: 22px; }
  .menu.current { background: #f0eef0; color: #3c6484; }

  .ribbon { display: flex; flex: none; border-bottom: 2px solid #d2d0d2; color: #777577; }
  .group { position: relative; flex: none; padding-top: 8px; }
  .group::after { content: ""; position: absolute; right: 0; top: 4px; bottom: 8px; width: 2px; background: #d6d4d6; }
  .tools { display: flex; height: 151px; }
  .caption { line-height: 32px; text-align: center; color: #6a686a; }
  .settings { width: 198px; padding-right: 10px; }
  .settings .tools { padding-left: 9px; }
  .sources { width: 515px; }
  .sources .tools { padding-left: 13px; }
  .monitors { width: 265px; }
  .monitors .tools { padding-left: 16px; }
  .solver { width: 320px; }
  .solver .tools { padding-left: 17px; gap: 17px; }
  .picks { width: 316px; }
  .picks .tools { padding-left: 10px; gap: 10px; }
  .mesh { width: 278px; }
  .mesh .tools { padding-left: 9px; }
  .check { width: 170px; }
  .big { display: flex; flex-direction: column; align-items: center; padding-top: 4px; line-height: 32px; white-space: nowrap; }
  .big svg { margin-bottom: 6px; }
  .big.dark { color: #3c3a3c; }
  .w88 { width: 88px; } .w104 { width: 104px; } .w112 { width: 112px; } .w124 { width: 124px; }
  .w140 { width: 140px; } .w156 { width: 156px; } .w172 { width: 172px; }
  .line { display: flex; align-items: center; gap: 4px; height: 32px; }
  .line.spaced { gap: 12px; }
  .arrow { width: 0; height: 0; border: 6px solid transparent; border-top: 8px solid #777; border-bottom: 0; }
  .stack { display: flex; flex-direction: column; }
  .small { display: flex; align-items: center; gap: 10px; height: 48px; white-space: nowrap; }
  .small .arrow { margin-left: 9px; }
  .glyph-m { font-size: 28px; font-weight: 600; fill: #fff; }

  .work { flex: 1; min-height: 0; display: grid; grid-template-columns: minmax(640px, 1027px) minmax(0, 1fr); }
  .side { display: flex; flex-direction: column; min-height: 0; padding-right: 9px; }
  .panel-title {
    display: flex; justify-content: space-between; align-items: center; flex: none;
    height: 33px; padding-right: 7px; background: #fff; border-bottom: 2px solid #8a888a;
    font: 20px "Liberation Mono", monospace; color: #111;
  }
  .panel-title span { padding-top: 3px; }
  .params { flex: none; background: #fff; border-right: 2px solid #8a888a; border-bottom: 2px solid #8a888a; padding-bottom: 11px; }
  table { width: 100%; table-layout: fixed; border-collapse: separate; border-spacing: 0; }
  .c-pin { width: 33px; } .c-a { width: 246px; }
  th, td { padding: 0 8px; text-align: left; font-weight: 400; box-sizing: border-box; }
  th { height: 47px; padding: 2px 8px 0 9px; border-right: 2px solid #e4e2e6; line-height: 32px; }
  th.filter { padding: 0; }
  th.sorted { position: relative; }
  th.sorted svg { position: absolute; top: 0; left: 46%; }
  td { height: 40px; padding-bottom: 7px; line-height: 30px; border-bottom: 2px solid #e6e4e6; }
  td.pin { padding: 0; background: #dddcde; }
  .pair { display: flex; justify-content: space-between; }
  .eq, .muted { color: #aaa8aa; }
  .eq { margin-right: -6px; }
  .picked td:not(.pin) { background: #b9b7b9; }
  .picked .muted { color: #999799; }
  .new { height: 40px; padding-left: 55px; line-height: 46px; color: #bbb9bb; border-bottom: 2px solid #e6e4e6; box-sizing: border-box; }
  .nav-title { margin-top: 7px; height: 34px; border: 0; }
  .search {
    flex: none; height: 32px; margin: 7px 0 8px; padding: 3px 0 0; border: 0; background: #fff;
    font: 20px "Liberation Mono", monospace; color: #333; box-sizing: border-box;
  }
  .search::placeholder { color: #a5a3a5; }
  .tree-box { flex: 1; min-height: 0; display: flex; background: #fff; border-top: 2px solid #a2a0a2; border-right: 2px solid #8a888a; }
  .tree { flex: 1; min-width: 0; margin: 0; padding: 1px 0 0; list-style: none; overflow: hidden; font-family: "DejaVu Sans Condensed", "DejaVu Sans", sans-serif; color: #222; }
  .tree li { display: flex; height: 32px; align-items: center; }
  .label { margin-left: 6px; padding: 1px 5px 0; line-height: 30px; white-space: nowrap; }
  .label.selected { background: #c3c1c3; }
  .dots { fill: none; stroke: #999; stroke-width: 2; stroke-dasharray: 2 2; }
  .scroll { flex: none; width: 32px; background: #f1eff1; display: flex; justify-content: center; }
  .thumb { width: 3px; height: 782px; background: #8a888a; }

  .view { display: flex; flex-direction: column; min-width: 0; min-height: 0; }
  .doc-tabs { flex: none; height: 56px; display: flex; align-items: flex-end; }
  .doc-tab {
    display: flex; align-items: center; gap: 8px; height: 54px; padding: 0 26px 0 22px; box-sizing: border-box;
    background: #fff; border: 1px solid #c4c2c4; border-bottom: 0; border-radius: 6px 6px 0 0;
    font: 20px "Liberation Mono", monospace; color: #444;
  }
  .canvas {
    flex: 1; min-height: 0; overflow: hidden; border: 5px double #8a888a; border-right: 0; border-bottom: 0;
    background: linear-gradient(#9c9db1 0, #a6a8b7 12%, #b3b4c2 26%, #c2c2cf 42%, #d8d8e0 58%, #e4e4e9 70%, #efeff3 84%, #f3f3f6 100%);
  }
  .scene { width: 100%; }
  .oa { font-family: "Liberation Sans", sans-serif; font-weight: 700; fill: #111; }

  .dialog {
    position: absolute; left: 627px; top: 499px; width: 818px; height: 620px; box-sizing: border-box;
    display: flex; flex-direction: column; background: #efedef; border: 1px solid #aaa8aa; border-radius: 14px;
    box-shadow: 0 24px 56px rgba(0, 0, 0, 0.36), 0 0 20px rgba(0, 0, 0, 0.14);
    font: 21px "Liberation Sans", "Noto Sans CJK SC", sans-serif; color: #111;
  }
  .dialog header {
    display: flex; justify-content: space-between; align-items: center; height: 58px; padding: 0 19px 3px 16px;
    background: #f2f0f3; border-radius: 14px 14px 0 0; font: 22px "Open Sans", sans-serif; color: #8e8c8e;
  }
  .tabs { display: flex; align-items: flex-end; height: 51px; padding-left: 13px; }
  .tab { height: 34px; padding: 0 8px; border: 1px solid #e0dee2; border-bottom: 0; background: #f3f1f4; }
  .tab.on { height: 40px; padding: 0 14px; background: #f9f8fa; }
  .page { flex: 1; margin: 0 17px 0 13px; padding: 27px 28px 0 30px; background: #f9f8fa; border: 1px solid #e4e2e5; box-sizing: border-box; }
  .all { display: flex; align-items: center; gap: 6px; height: 27px; }
  .all input { appearance: none; width: 26px; height: 26px; margin: 0; border: 2px solid #7c7a7c; border-radius: 5px; background: #f5f4f6; }
  .fields { display: grid; grid-template-columns: 72px 277px 99px 277px; grid-auto-rows: 47px; row-gap: 18px; align-items: center; margin-top: 19px; }
  .second { padding-left: 23px; }
  .unit { padding-left: 12px; }
  .off { color: #aaa8aa; }
  .combo { display: grid; align-items: center; }
  .combo > * { grid-area: 1 / 1; }
  .combo svg { justify-self: end; margin-right: 8px; pointer-events: none; }
  select { appearance: none; height: 47px; padding: 0 5px; border: 2px solid #8e8c8e; border-radius: 3px; background: #fff; font: inherit; color: inherit; }
  #cond { height: 39px; padding: 0 7px; border: 1px solid #ecebed; background: #f9f8fa; font: inherit; color: #8c8a8c; box-sizing: border-box; }
  .btn { width: 148px; height: 41px; border: 2px solid #d0ced2; border-radius: 7px; background: #fdfdfe; }
  .btn.wide { width: 273px; justify-self: center; }
  footer { display: flex; justify-content: flex-end; gap: 16px; padding: 18px 12px 17px; }

  .mark { position: absolute; z-index: 3; border: 6px solid #ff2600; border-radius: 10px; box-sizing: border-box; pointer-events: none; }
  .num { position: absolute; z-index: 3; font: 46px/46px "Liberation Sans", sans-serif; color: #ff2600; pointer-events: none; }
  .mark-1 { left: -1px; top: 0; width: 181px; height: 62px; }
  .num-1 { left: 97px; top: 48px; }
  .mark-2 { left: 0; top: 100px; width: 217px; height: 107px; }
  .num-2 { left: 225px; top: 137px; }
  .mark-3 { left: 25px; top: 295px; width: 422px; height: 97px; }
  .num-3 { left: 176px; top: 381px; }
  .mark-4 { left: 299px; top: 519px; width: 187px; height: 139px; }
  .num-4 { left: 245px; top: 547px; }
</style>
